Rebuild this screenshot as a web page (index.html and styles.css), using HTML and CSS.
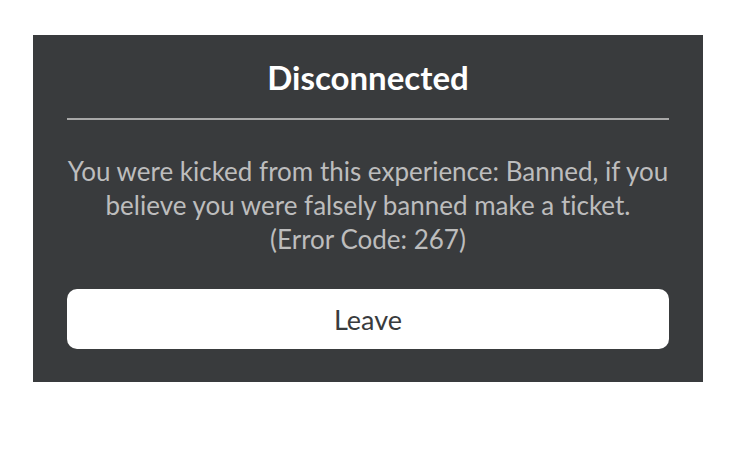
FILE: index.html
```html
<!DOCTYPE html>
<html>
<head>
<meta charset="utf-8">
<link rel="stylesheet" href="styles.css">
</head>
<body>
<div class="page">
  <div class="dialog">
    <h1 class="title">Disconnected</h1>
    <div class="divider"></div>
    <p class="message">You were kicked from this experience: Banned, if you<br>believe you were falsely banned make a ticket.<br>(Error Code: 267)</p>
    <button class="leave">Leave</button>
  </div>
</div>
</body>
</html>
```

FILE: styles.css
```css
html, body {
  margin: 0;
  padding: 0;
  background: #ffffff;
}
.page {
  padding: 35px 0 0 33px;
}
.dialog {
  width: 670px;
  height: 347px;
  box-sizing: border-box;
  background: #393b3d;
  padding: 0 34px;
  display: flex;
  flex-direction: column;
  font-family: Lato, "Open Sans", sans-serif;
  font-variant-ligatures: none;
}
.title {
  margin: 0;
  height: 83px;
  display: flex;
  align-items: center;
  justify-content: center;
  color: #ffffff;
  font-size: 33px;
  font-weight: 700;
}
.divider {
  height: 2px;
  background: #a8a8a8;
}
.message {
  margin: 34px 0 0;
  text-align: center;
  color: #bdbdbd;
  font-size: 26px;
  line-height: 34px;
}
.leave {
  margin-top: 33px;
  height: 60px;
  border: none;
  border-radius: 10px;
  background: #ffffff;
  color: #393b3d;
  font-family: Lato, "Open Sans", sans-serif;
  font-variant-ligatures: none;
  font-size: 27px;
  padding: 0;
}
```
